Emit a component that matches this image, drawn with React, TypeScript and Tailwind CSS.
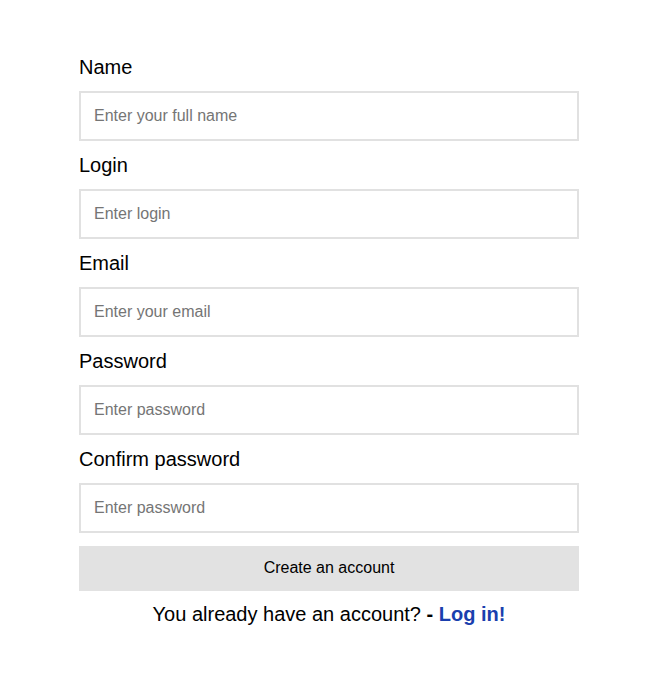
const fields = [
  { label: "Name", placeholder: "Enter your full name", type: "text" },
  { label: "Login", placeholder: "Enter login", type: "text" },
  { label: "Email", placeholder: "Enter your email", type: "email" },
  { label: "Password", placeholder: "Enter password", type: "password" },
  { label: "Confirm password", placeholder: "Enter password", type: "password" },
];

export default function App() {
  return (
    <div className="min-h-[695px] bg-white pl-[79px] pt-[56px] font-['Liberation_Sans',Arial,sans-serif] text-black">
      <form className="w-[500px]" onSubmit={(e) => e.preventDefault()}>
        {fields.map((f) => (
          <label key={f.label} className="mb-[13px] block">
            <span className="block text-[20px] leading-[23px]">{f.label}</span>
            <input
              type={f.type}
              placeholder={f.placeholder}
              className="mt-[12px] block h-[50px] w-full border-2 border-[#e1e1e1] bg-white pl-[13px] text-[16px] text-black outline-none placeholder:text-[#757575]"
            />
          </label>
        ))}
        <button
          type="submit"
          className="block h-[45px] w-full bg-[#e2e2e2] pb-[2px] text-[16px] text-black"
        >
          Create an account
        </button>
        <p className="mt-[12px] text-center text-[20px] leading-[23px]">
          You already have an account? <b>-</b>{" "}
          <a href="#" className="font-bold text-[#1a3fae]">
            Log in!
          </a>
        </p>
      </form>
    </div>
  );
}
